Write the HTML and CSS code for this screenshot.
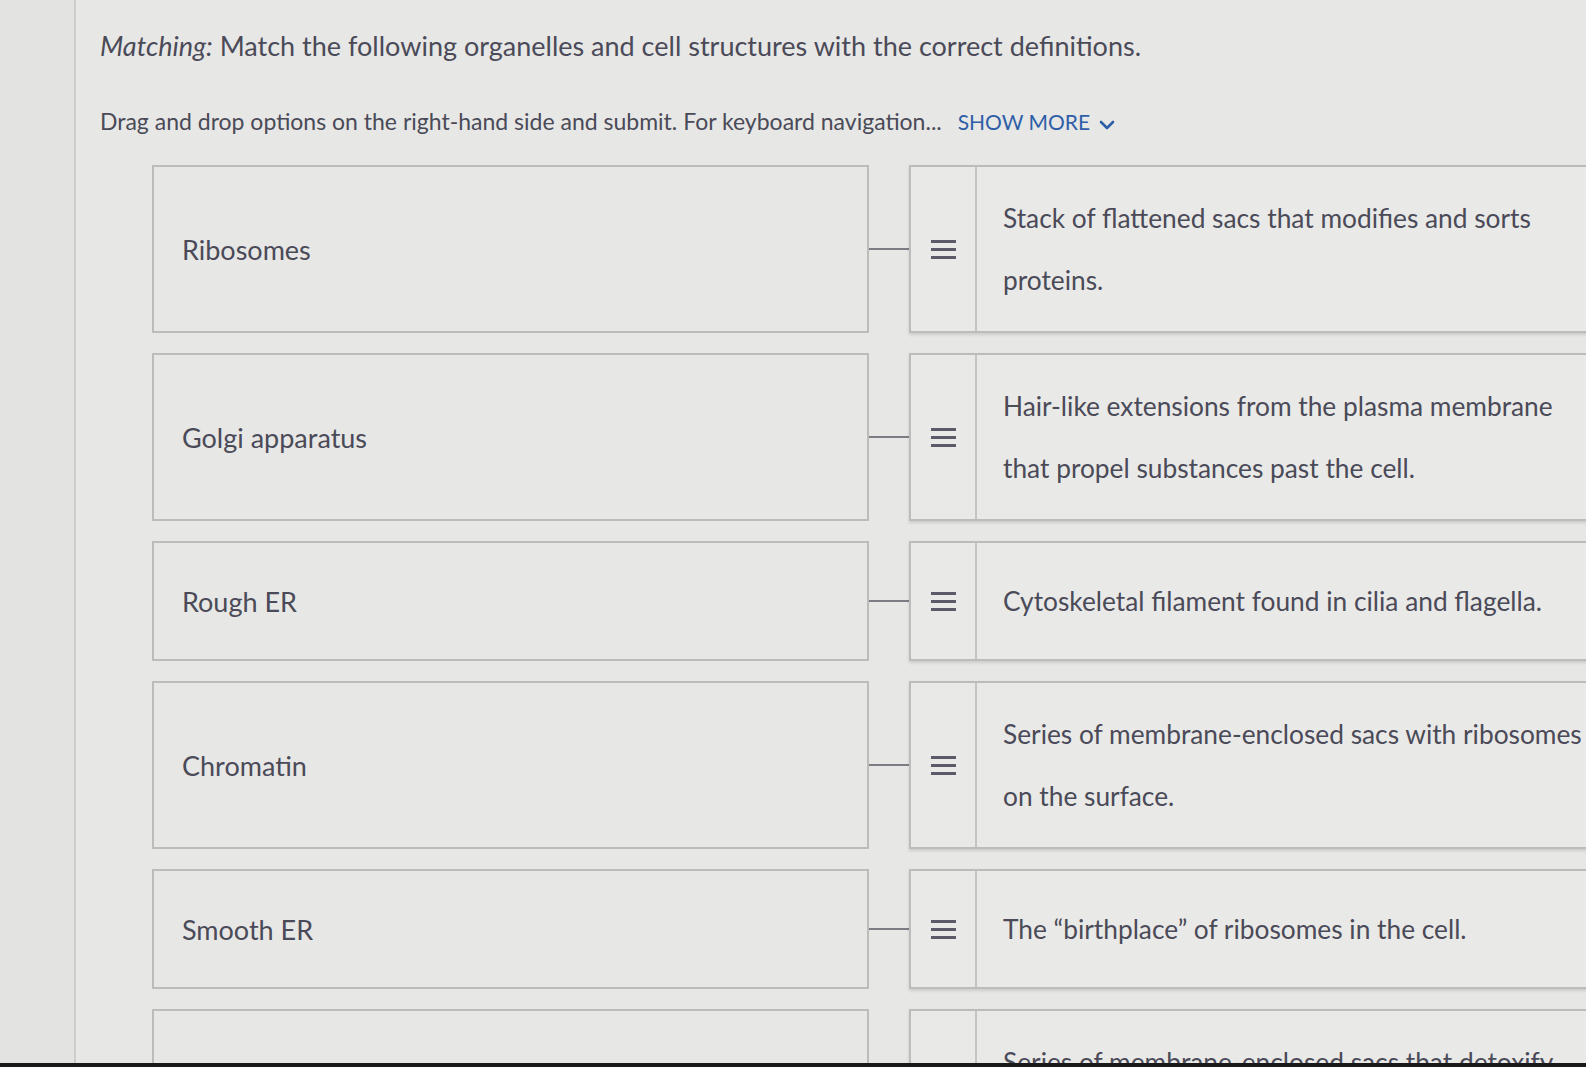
FILE: index.html
```html
<!DOCTYPE html>
<html lang="en">
<head>
    <meta charset="UTF-8">
    <meta name="viewport" content="width=device-width, initial-scale=1.0">
    <title>Matching</title>
    <link rel="stylesheet" href="styles.css">
</head>
<body>
    <div class="page">
        <div class="sidebar"></div>
        <div class="main">
            <h1 class="question"><em>Matching:</em> Match the following organelles and cell structures with the correct definitions.</h1>
            <p class="hint">Drag and drop options on the right-hand side and submit. For keyboard navigation... <a class="show-more" href="#">SHOW MORE <svg width="16" height="10" viewBox="0 0 16 10"><path d="M2 2 L8 8 L14 2" fill="none" stroke="#2f5ea8" stroke-width="2.6" stroke-linecap="round" stroke-linejoin="round"/></svg></a></p>

            <div class="match-list">
                <div class="match-row tall">
                    <div class="term">Ribosomes</div>
                    <div class="connector"></div>
                    <div class="option">
                        <div class="handle"><span></span><span></span><span></span></div>
                        <div class="option-text">Stack of flattened sacs that modifies and sorts<br>proteins.</div>
                    </div>
                </div>
                <div class="match-row tall">
                    <div class="term">Golgi apparatus</div>
                    <div class="connector"></div>
                    <div class="option">
                        <div class="handle"><span></span><span></span><span></span></div>
                        <div class="option-text">Hair-like extensions from the plasma membrane<br>that propel substances past the cell.</div>
                    </div>
                </div>
                <div class="match-row">
                    <div class="term">Rough ER</div>
                    <div class="connector"></div>
                    <div class="option">
                        <div class="handle"><span></span><span></span><span></span></div>
                        <div class="option-text">Cytoskeletal filament found in cilia and flagella.</div>
                    </div>
                </div>
                <div class="match-row tall">
                    <div class="term">Chromatin</div>
                    <div class="connector"></div>
                    <div class="option">
                        <div class="handle"><span></span><span></span><span></span></div>
                        <div class="option-text">Series of membrane-enclosed sacs with ribosomes<br>on the surface.</div>
                    </div>
                </div>
                <div class="match-row">
                    <div class="term">Smooth ER</div>
                    <div class="connector"></div>
                    <div class="option">
                        <div class="handle"><span></span><span></span><span></span></div>
                        <div class="option-text">The “birthplace” of ribosomes in the cell.</div>
                    </div>
                </div>
                <div class="match-row tall">
                    <div class="term"></div>
                    <div class="connector"></div>
                    <div class="option">
                        <div class="handle"><span></span><span></span><span></span></div>
                        <div class="option-text">Series of membrane-enclosed sacs that detoxify<br>drugs and poisons.</div>
                    </div>
                </div>
            </div>
        </div>
    </div>
    <div class="bottom-bar"></div>
</body>
</html>
```

FILE: styles.css
```css
html, body {
    height: 100%;
}
body {
    margin: 0;
    padding: 0;
    font-family: Lato, "Open Sans", sans-serif;
    color: #4a4a58;
    background-color: #e7e7e5;
    overflow: hidden;
    position: relative;
}
.page {
    display: flex;
    height: 100%;
}
.sidebar {
    width: 74px;
    flex-shrink: 0;
    background: #e3e3e1;
    border-right: 2px solid #cdcdcb;
}
.main {
    flex: 1;
    padding: 28px 0 0 24px;
    min-width: 0;
}
.question {
    margin: 0;
    font-size: 27px;
    font-weight: 400;
    line-height: 36px;
}
.question em {
    font-style: italic;
}
.hint {
    margin: 42px 0 0 0;
    font-size: 23px;
    line-height: 30px;
}
.show-more {
    color: #2f5ea8;
    text-decoration: none;
    margin-left: 10px;
    font-size: 21px;
}
.show-more svg {
    margin-left: 4px;
    vertical-align: middle;
}
.match-list {
    margin-top: 28px;
    margin-left: 52px;
    display: flex;
    flex-direction: column;
    gap: 20px;
}
.match-row {
    display: flex;
    align-items: stretch;
    min-height: 120px;
}
.match-row.tall {
    min-height: 168px;
}
.term {
    width: 717px;
    flex-shrink: 0;
    border: 2px solid #bcbcba;
    display: flex;
    align-items: center;
    padding-left: 28px;
    font-size: 27px;
    box-sizing: border-box;
}
.connector {
    width: 40px;
    flex-shrink: 0;
    align-self: center;
    height: 2px;
    background: #7d7d86;
}
.option {
    flex: 1;
    margin-right: -80px;
    display: flex;
    border: 2px solid #bcbcba;
    box-shadow: 0 2px 3px rgba(0, 0, 0, 0.12);
    background: #e9e9e7;
}
.handle {
    width: 64px;
    flex-shrink: 0;
    border-right: 2px solid #c4c4c2;
    display: flex;
    flex-direction: column;
    align-items: center;
    justify-content: center;
    gap: 5px;
}
.handle span {
    display: block;
    width: 25px;
    height: 3px;
    background: #5a5a6a;
}
.option-text {
    display: flex;
    align-items: center;
    padding: 20px 0 20px 26px;
    font-size: 26.3px;
    line-height: 62px;
}
.bottom-bar {
    position: absolute;
    left: 0;
    right: 0;
    bottom: 0;
    height: 4px;
    background: #1a1a1a;
}
```
